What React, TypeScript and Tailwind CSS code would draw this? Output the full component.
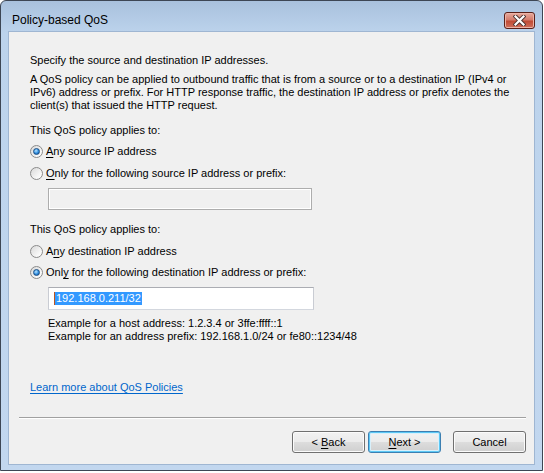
import React from "react";

const font = "font-['Liberation_Sans',Arial,sans-serif]";

function Radio({ checked }: { checked?: boolean }) {
  return (
    <span className="flex h-[13px] w-[13px] shrink-0 items-center justify-center rounded-full border border-[#8b8b8b] bg-[linear-gradient(135deg,#d9d9d9,#f7f7f7_70%,#ffffff)]">
      {checked && (
        <span className="h-[7px] w-[7px] rounded-full border border-[#1b4f85] bg-[radial-gradient(circle_at_40%_35%,#b8e4ff,#2f8ee0_55%,#11468a)]" />
      )}
    </span>
  );
}

function RadioRow({ checked, children }: { checked?: boolean; children: React.ReactNode }) {
  return (
    <div className="flex h-[13px] items-center gap-[3px]">
      <Radio checked={checked} />
      <span className="leading-[13px]">{children}</span>
    </div>
  );
}

function Btn({ children, primary }: { children: React.ReactNode; primary?: boolean }) {
  return (
    <button
      className={
        "flex h-[22px] w-[73px] items-center justify-center rounded-[3px] border leading-[13px] text-black bg-[linear-gradient(#f2f2f2,#ebebeb_50%,#dddddd_51%,#cfcfcf)] " +
        (primary
          ? "border-[#3c7fb1] shadow-[inset_0_0_0_1px_#5cc8f5,inset_0_0_0_2px_#d8f0fb]"
          : "border-[#707070] shadow-[inset_0_0_0_1px_#fbfbfb]")
      }
    >
      {children}
    </button>
  );
}

export default function App() {
  return (
    <div className={`h-[473px] w-[544px] bg-white ${font} text-[11px] text-black`}>
      <div className="flex h-[471px] w-[543px] flex-col rounded-t-[6px] border border-[#3d4654] bg-[linear-gradient(#a9c1dd,#bcd3ec_32px,#c2d7ef)] px-[7px] pb-[5px]">
        {/* title bar */}
        <div className="flex h-[30px] shrink-0 items-start pt-[11px]">
          <div className="flex h-[17px] flex-1 items-center pl-[4px] text-[12px] leading-[17px]">Policy-based QoS</div>
          <div className="flex h-[17px] w-[31px] items-center justify-center rounded-[3px] border border-[#5a2019] bg-[linear-gradient(#e7aa9d,#d47c6c_45%,#c04b35_55%,#d0705c)] shadow-[inset_0_0_0_1px_#ecb3a6]">
            <svg width="13" height="11" viewBox="0 0 13 11">
              <path d="M2.5 1.5 L10.5 9.5 M10.5 1.5 L2.5 9.5" stroke="#4a3330" strokeWidth="4" strokeLinecap="square" />
              <path d="M2.5 1.5 L10.5 9.5 M10.5 1.5 L2.5 9.5" stroke="#ffffff" strokeWidth="2.2" strokeLinecap="square" />
            </svg>
          </div>
        </div>

        {/* client */}
        <div className="flex flex-1 flex-col border border-[#9fb6d2] bg-[#f0f0f0] pl-[21px] pr-[8px] pt-[22px]">
          <p className="leading-[13px]">Specify the source and destination IP addresses.</p>
          <p className="mt-[6px] leading-[13px]">
            A QoS policy can be applied to outbound traffic that is from a source or to a destination IP (IPv4 or
            <br />
            IPv6) address or prefix. For HTTP response traffic, the destination IP address or prefix denotes the
            <br />
            client(s) that issued the HTTP request.
          </p>

          <p className="mt-[12px] leading-[13px]">This QoS policy applies to:</p>
          <div className="mt-[8px]">
            <RadioRow checked>
              <span className="underline underline-offset-[2px]">A</span>ny source IP address
            </RadioRow>
          </div>
          <div className="mt-[9px]">
            <RadioRow>
              <span className="underline underline-offset-[2px]">O</span>nly for the following source IP address or prefix:
            </RadioRow>
          </div>
          <div className="ml-[18px] mt-[8px] h-[22px] w-[264px] border border-[#adadad] bg-[#f0f0f0] shadow-[inset_0_0_0_1px_#ffffff]" />

          <p className="mt-[13px] leading-[13px]">This QoS policy applies to:</p>
          <div className="mt-[9px]">
            <RadioRow>
              A<span className="underline underline-offset-[2px]">n</span>y destination IP address
            </RadioRow>
          </div>
          <div className="mt-[8px]">
            <RadioRow checked>
              Onl<span className="underline underline-offset-[2px]">y</span> for the following destination IP address or prefix:
            </RadioRow>
          </div>
          <div className="ml-[18px] mt-[8px] flex h-[23px] w-[266px] items-center border border-[#abadb3] border-l-[#c9ccd3] border-r-[#c9ccd3] border-b-[#d3d7de] bg-white pl-[5px]">
            <span className="h-[13px] w-[1px] bg-[#c0561e]" />
            <span className="bg-[#3399ff] px-[1px] leading-[13px] text-white">192.168.0.211/32</span>
          </div>
          <p className="ml-[18px] mt-[7px] leading-[13px]">
            Example for a host address: 1.2.3.4 or 3ffe:ffff::1
            <br />
            Example for an address prefix: 192.168.1.0/24 or fe80::1234/48
          </p>

          <a className="mt-[38px] w-fit leading-[13px] text-[#0066cc] underline underline-offset-[2px]" href="#">
            Learn more about QoS Policies
          </a>

          <div className="-ml-[11px] mt-[23px] h-[2px] border-t border-[#a0a0a0] border-b border-b-white" />

          <div className="mt-[12px] flex justify-end">
            <Btn>
              &lt; <span className="ml-[3px] underline underline-offset-[2px]">B</span>ack
            </Btn>
            <div className="ml-[3px]">
              <Btn primary>
                <span className="underline underline-offset-[2px]">N</span>ext &gt;
              </Btn>
            </div>
            <div className="ml-[12px]">
              <Btn>Cancel</Btn>
            </div>
          </div>
        </div>
      </div>
    </div>
  );
}
